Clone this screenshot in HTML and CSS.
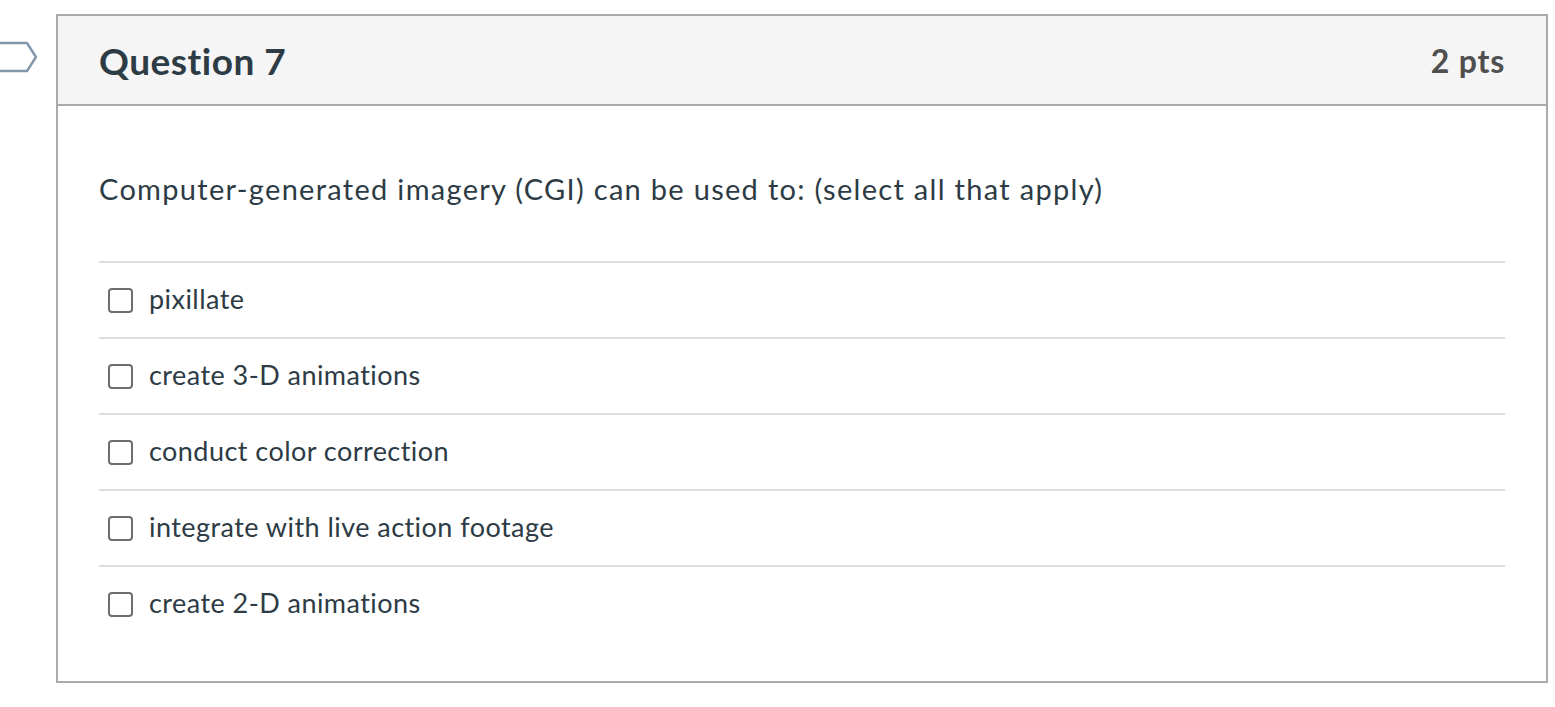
FILE: index.html
```html
<!DOCTYPE html>
<html lang="en">
<head>
<meta charset="utf-8">
<title>Question 7</title>
<link rel="stylesheet" href="styles.css">
</head>
<body>
<div class="page">
  <svg class="bookmark" width="40" height="32" viewBox="0 0 40 32" aria-hidden="true">
    <path d="M-4 2 H27 L36 16 L27 30 H-4" fill="#ffffff" stroke="#8196aa" stroke-width="2.4" stroke-linejoin="round"/>
  </svg>
  <div class="question">
    <div class="q-header">
      <h2 class="q-title">Question 7</h2>
      <span class="q-points">2 pts</span>
    </div>
    <div class="q-body">
      <p class="q-text">Computer-generated imagery (CGI) can be used to: (select all that apply)</p>
      <ul class="answers">
        <li class="answer"><span class="box"></span><span class="label">pixillate</span></li>
        <li class="answer"><span class="box"></span><span class="label">create 3-D animations</span></li>
        <li class="answer"><span class="box"></span><span class="label">conduct color correction</span></li>
        <li class="answer"><span class="box"></span><span class="label">integrate with live action footage</span></li>
        <li class="answer"><span class="box"></span><span class="label">create 2-D animations</span></li>
      </ul>
    </div>
  </div>
</div>
</body>
</html>
```
FILE: styles.css
```css
html, body {
  margin: 0;
  padding: 0;
  background: #ffffff;
}
body {
  font-family: Lato, "Liberation Sans", sans-serif;
  color: #2d3b45;
}
.page {
  position: relative;
  padding: 14px 7px 0 56px;
}
.bookmark {
  position: absolute;
  left: 0;
  top: 41px;
  overflow: visible;
}
.question {
  border: 2px solid #aaaaaa;
  height: 665px;
  box-sizing: content-box;
}
.q-header {
  display: flex;
  align-items: center;
  justify-content: space-between;
  height: 88px;
  background: #f5f5f5;
  border-bottom: 2px solid #aaaaaa;
  padding: 0 41px;
}
.q-title {
  margin: 0;
  font-size: 37px;
  font-weight: 700;
  letter-spacing: 0.5px;
  color: #2d3b45;
}
.q-points {
  font-size: 32px;
  font-weight: 700;
  letter-spacing: 0.8px;
  color: #4f4f4f;
}
.q-body {
  padding: 0 41px;
}
.q-text {
  margin: 62px 0 0;
  font-size: 29px;
  line-height: 42px;
  letter-spacing: 1.3px;
}
.answers {
  list-style: none;
  margin: 51px 0 0;
  padding: 0;
}
.answer {
  display: flex;
  align-items: center;
  height: 74px;
  border-top: 2px solid #dddddd;
}
.box {
  width: 21px;
  height: 21px;
  border: 2px solid #6e6e6e;
  border-radius: 4px;
  margin-left: 9px;
  margin-right: 16px;
  flex: none;
}
.label {
  font-size: 27px;
  letter-spacing: 0.45px;
  margin-bottom: 4px;
}
```
